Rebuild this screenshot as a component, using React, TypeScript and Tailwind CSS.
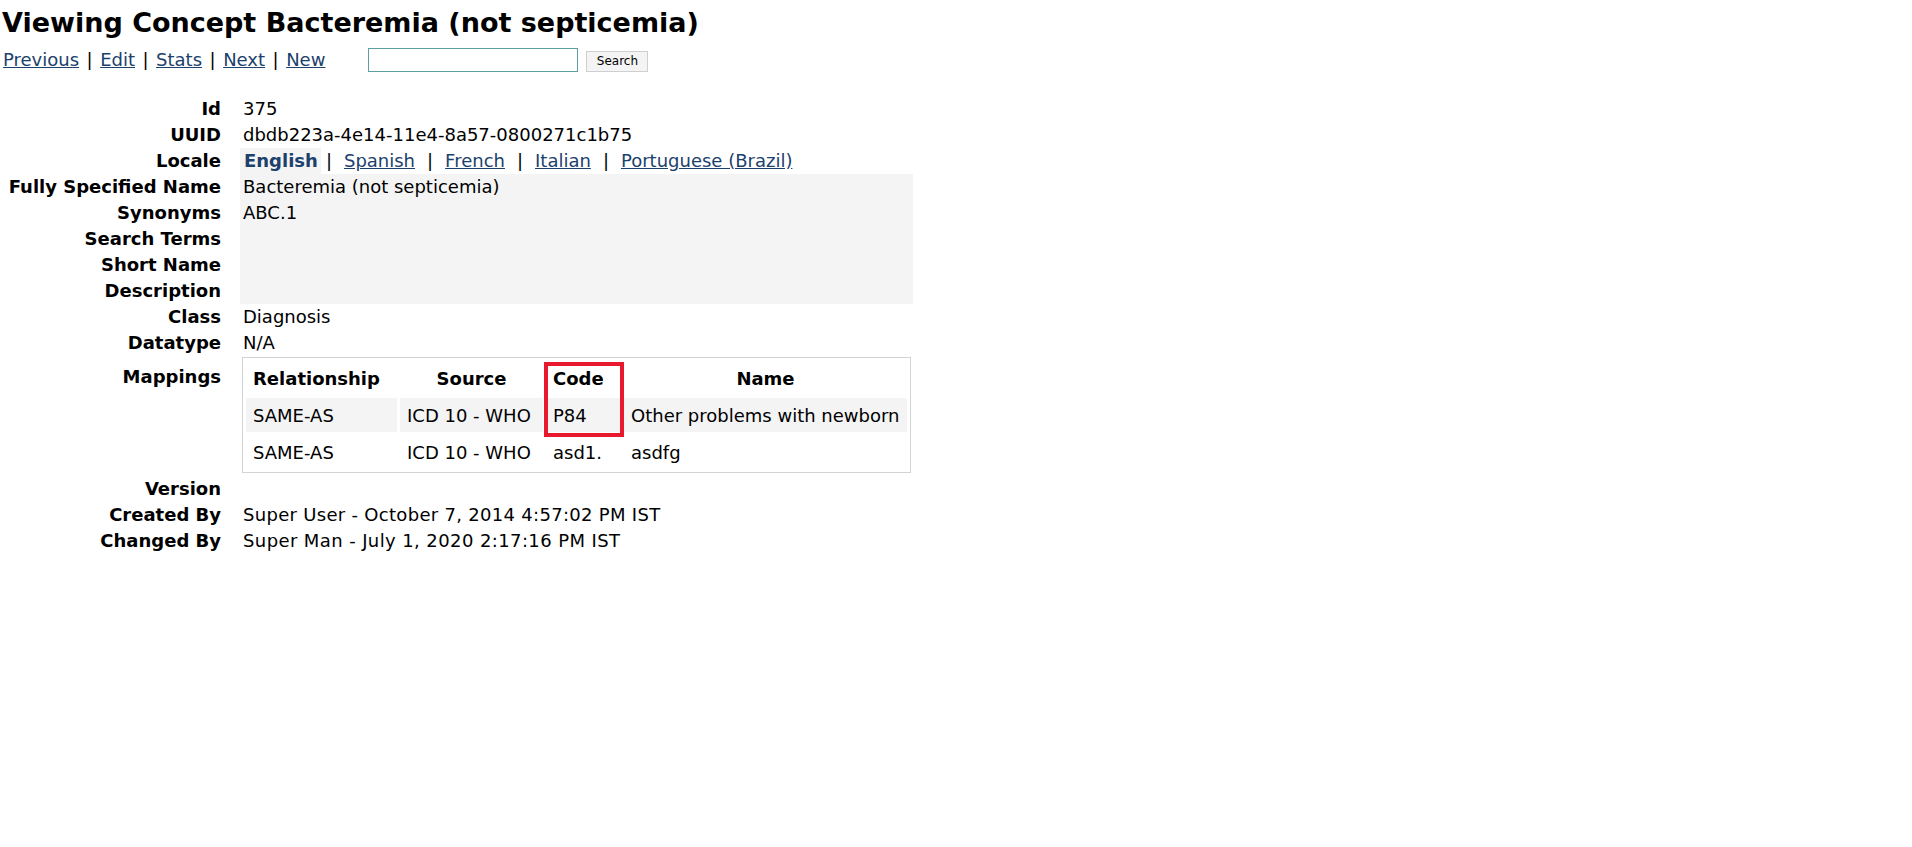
import React from 'react';

const linkCls = 'text-[#1b416c] underline';

const Sep: React.FC<{ className?: string }> = ({ className }) => (
  <span className={className}>|</span>
);

const Row: React.FC<{ label: string; grey?: boolean; valueClass?: string; children?: React.ReactNode }> = ({
  label,
  grey,
  valueClass = '',
  children,
}) => (
  <div className="flex h-[26px] leading-[26px]">
    <div className="w-[221px] shrink-0 text-right font-bold whitespace-nowrap">{label}</div>
    <div className={`ml-[19px] w-[673px] pl-[3px] whitespace-nowrap ${grey ? 'bg-[#f4f4f4]' : ''} ${valueClass}`}>
      {children}
    </div>
  </div>
);

const mappings = [
  { rel: 'SAME-AS', source: 'ICD 10 - WHO', code: 'P84', name: 'Other problems with newborn' },
  { rel: 'SAME-AS', source: 'ICD 10 - WHO', code: 'asd1.', name: 'asdfg' },
];

export default function App() {
  const nav = ['Previous', 'Edit', 'Stats', 'Next', 'New'];
  const locales = ['Spanish', 'French', 'Italian', 'Portuguese (Brazil)'];

  return (
    <div className="min-h-screen bg-white text-black text-[18px] font-['DejaVu_Sans','Verdana',sans-serif]">
      <h2 className="pl-[2px] pt-[6px] text-[27px] font-bold leading-[34px] whitespace-nowrap">
        Viewing Concept Bacteremia (not septicemia)
      </h2>

      <div className="mt-[8px] flex h-[24px] items-end pl-[3px] leading-[24px] whitespace-nowrap">
        {nav.map((n, i) => (
          <React.Fragment key={n}>
            {i > 0 && <Sep className="mx-[7.5px]" />}
            <a href="#" className={linkCls}>{n}</a>
          </React.Fragment>
        ))}
        <input type="text" className="ml-[43px] h-[24px] w-[210px] border border-[#5f9ea0] bg-white outline-none" />
        <button className="ml-[8px] h-[21px] w-[62px] border border-[#cfcfcf] bg-[#f4f4f4] text-[12px] leading-[19px] text-black">
          Search
        </button>
      </div>

      <div className="mt-[24px]">
        <Row label="Id">375</Row>
        <Row label="UUID">dbdb223a-4e14-11e4-8a57-0800271c1b75</Row>
        <div className="flex h-[26px] leading-[26px]">
          <div className="w-[221px] shrink-0 text-right font-bold">Locale</div>
          <div className="ml-[19px] flex whitespace-nowrap">
            <span className="bg-[#f4f4f4] pl-[4px] pr-[3px] font-bold text-[#1b416c]">English</span>
            {locales.map((l, i) => (
              <React.Fragment key={l}>
                <Sep className={i === 0 ? 'ml-[5px] mr-[12px]' : 'mx-[12px]'} />
                <a href="#" className={linkCls}>{l}</a>
              </React.Fragment>
            ))}
          </div>
        </div>
        <Row label="Fully Specified Name" grey>Bacteremia (not septicemia)</Row>
        <Row label="Synonyms" grey>ABC.1</Row>
        <Row label="Search Terms" grey />
        <Row label="Short Name" grey />
        <Row label="Description" grey />
        <Row label="Class">Diagnosis</Row>
        <Row label="Datatype">N/A</Row>

        <div className="flex">
          <div className="w-[221px] shrink-0 pt-[8px] text-right font-bold leading-[26px]">Mappings</div>
          <div className="relative ml-[21px] mt-[1px] mb-[3px]">
            <table className="w-[669px] table-fixed border-separate border-spacing-[3px] border border-[#d3d3d3]">
              <colgroup>
                <col className="w-[151px]" />
                <col className="w-[143px]" />
                <col className="w-[75px]" />
                <col className="w-[283px]" />
              </colgroup>
              <thead>
                <tr className="h-[34px]">
                  <th className="px-[7px] text-left font-bold">Relationship</th>
                  <th className="px-[7px] text-center font-bold">Source</th>
                  <th className="px-[7px] text-left font-bold">Code</th>
                  <th className="px-[7px] text-center font-bold">Name</th>
                </tr>
              </thead>
              <tbody>
                {mappings.map((m, i) => (
                  <tr key={i} className="h-[34px]">
                    {[m.rel, m.source, m.code, m.name].map((v, j) => (
                      <td key={j} className={`px-[7px] whitespace-nowrap ${i === 0 ? 'bg-[#f4f4f4]' : ''}`}>{v}</td>
                    ))}
                  </tr>
                ))}
              </tbody>
            </table>
            <div className="pointer-events-none absolute left-[302px] top-[5px] h-[75px] w-[80px] border-4 border-[#e8192c]" />
          </div>
        </div>

        <Row label="Version" />
        <Row label="Created By" valueClass="tracking-[0.3px]">Super User - October 7, 2014 4:57:02 PM IST</Row>
        <Row label="Changed By" valueClass="tracking-[0.4px]">Super Man - July 1, 2020 2:17:16 PM IST</Row>
      </div>
    </div>
  );
}
